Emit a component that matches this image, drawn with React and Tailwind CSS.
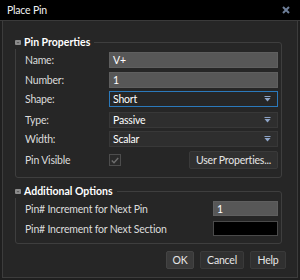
import React from "react";

const Arrow = () => (
  <svg width="7" height="6" viewBox="0 0 7 6" className="block">
    <rect x="0.5" y="0" width="6" height="1" fill="#8ea5c8" />
    <path d="M0.5 2h6L3.5 5.5z" fill="#8ea5c8" />
  </svg>
);

const Collapse = () => (
  <svg width="6" height="5" viewBox="0 0 6 5" className="block">
    <rect x="0" y="0" width="6" height="5" rx="1" fill="#8c8c8c" />
    <path d="M1.5 2h3L3 3.5z" fill="#555" />
  </svg>
);

const Label = ({ children, w }) => (
  <span className={`${w} pl-[9px] shrink-0 whitespace-nowrap text-[#dcdcdc]`}>{children}</span>
);

const TextBox = ({ value }) => (
  <div className="flex-1 h-full bg-[#575757] border border-[#5f5f5f] flex items-center pl-[3px] text-white">
    {value}
  </div>
);

const Select = ({ value, active }) => (
  <div
    className={`flex-1 h-full flex items-center justify-between pl-[3px] pr-[6px] text-white ${
      active ? "bg-[#262626] border border-[#2b79bb]" : "bg-[#2e2e2e] border border-[#383838]"
    }`}
  >
    <span>{value}</span>
    <Arrow />
  </div>
);

export default function App() {
  return (
    <div
      className="w-[300px] h-[280px] bg-[#1f1f1f] flex flex-col text-[10.5px] leading-[14px] tracking-[-0.2px]"
      style={{ fontFamily: 'Lato, "Noto Sans", sans-serif' }}
    >
      <div className="h-[21px] bg-black border-b border-[#3a3a3a] flex items-center justify-between pl-[7px] pr-[10px] shrink-0">
        <span className="text-[#f2f2f2]">Place Pin</span>
        <svg width="8" height="8" viewBox="0 0 8 8" className="block">
          <path d="M1 1L7 7M7 1L1 7" stroke="#6e7f99" strokeWidth="2" />
        </svg>
      </div>
      <div className="flex-1 px-[2px] pb-[2px] flex">
        <div className="flex-1 bg-[#262626] border-l border-r border-b border-[#3c3c3c] pl-[12px] pt-[14px] flex flex-col">
          <fieldset className="w-[267px] border border-[#3e3e3e] rounded-[3px] px-0 pb-[8px]">
            <legend className="-ml-[1px] flex items-center pr-[4px]">
              <Collapse />
              <span className="ml-[3px] font-bold text-white tracking-normal">Pin Properties</span>
            </legend>
            <div className="pt-[3px] pr-[3px] flex flex-col">
              <div className="flex items-center h-[16px]">
                <Label w="w-[93px]">Name:</Label>
                <TextBox value="V+" />
              </div>
              <div className="flex items-center h-[16px] mt-[4px]">
                <Label w="w-[93px]">Number:</Label>
                <TextBox value="1" />
              </div>
              <div className="flex items-center h-[16px] mt-[3px]">
                <Label w="w-[93px]">Shape:</Label>
                <Select value="Short" active />
              </div>
              <div className="flex items-center h-[16px] mt-[5px]">
                <Label w="w-[93px]">Type:</Label>
                <Select value="Passive" />
              </div>
              <div className="flex items-center h-[16px] mt-[3px]">
                <Label w="w-[93px]">Width:</Label>
                <Select value="Scalar" />
              </div>
              <div className="flex items-center h-[18px] mt-[4px]">
                <Label w="w-[93px]">Pin Visible</Label>
                <div className="w-[12px] h-[12px] border border-[#4d4d4d] bg-[#2a2a2a] flex items-center justify-center">
                  <svg width="8" height="7" viewBox="0 0 8 7" className="block">
                    <path d="M0.8 3.5L3 5.7L7.2 1" stroke="#6f6f6f" strokeWidth="1.4" fill="none" />
                  </svg>
                </div>
                <div className="flex-1" />
                <div className="w-[89px] h-full bg-[#303030] border border-[#3a3a3a] rounded-[2px] flex items-center justify-center whitespace-nowrap text-[#e6e6e6]">
                  User Properties...
                </div>
              </div>
            </div>
          </fieldset>
          <fieldset className="w-[267px] mt-[6px] border border-[#3e3e3e] rounded-[3px] px-0 pb-[7px]">
            <legend className="-ml-[1px] flex items-center pr-[4px]">
              <Collapse />
              <span className="ml-[3px] font-bold text-white tracking-normal">Additional Options</span>
            </legend>
            <div className="pt-[3px] pr-[3px] flex flex-col">
              <div className="flex items-center h-[15px]">
                <Label w="w-[197px]">Pin# Increment for Next Pin</Label>
                <TextBox value="1" />
              </div>
              <div className="flex items-center h-[15px] mt-[5px]">
                <Label w="w-[197px]">Pin# Increment for Next Section</Label>
                <div className="flex-1 h-full bg-black border border-[#4a4a4a]" />
              </div>
            </div>
          </fieldset>
          <div className="flex justify-end gap-[6px] mt-[7px] pr-[11px]">
            <div className="w-[28px] h-[18px] bg-[#3a3a3a] border border-[#444] rounded-[2px] flex items-center justify-center text-[#e6e6e6]">
              OK
            </div>
            <div className="w-[44px] h-[18px] bg-[#303030] border border-[#3a3a3a] rounded-[2px] flex items-center justify-center text-[#e6e6e6]">
              Cancel
            </div>
            <div className="w-[36px] h-[18px] bg-[#303030] border border-[#3a3a3a] rounded-[2px] flex items-center justify-center text-[#e6e6e6]">
              Help
            </div>
          </div>
        </div>
      </div>
    </div>
  );
}
